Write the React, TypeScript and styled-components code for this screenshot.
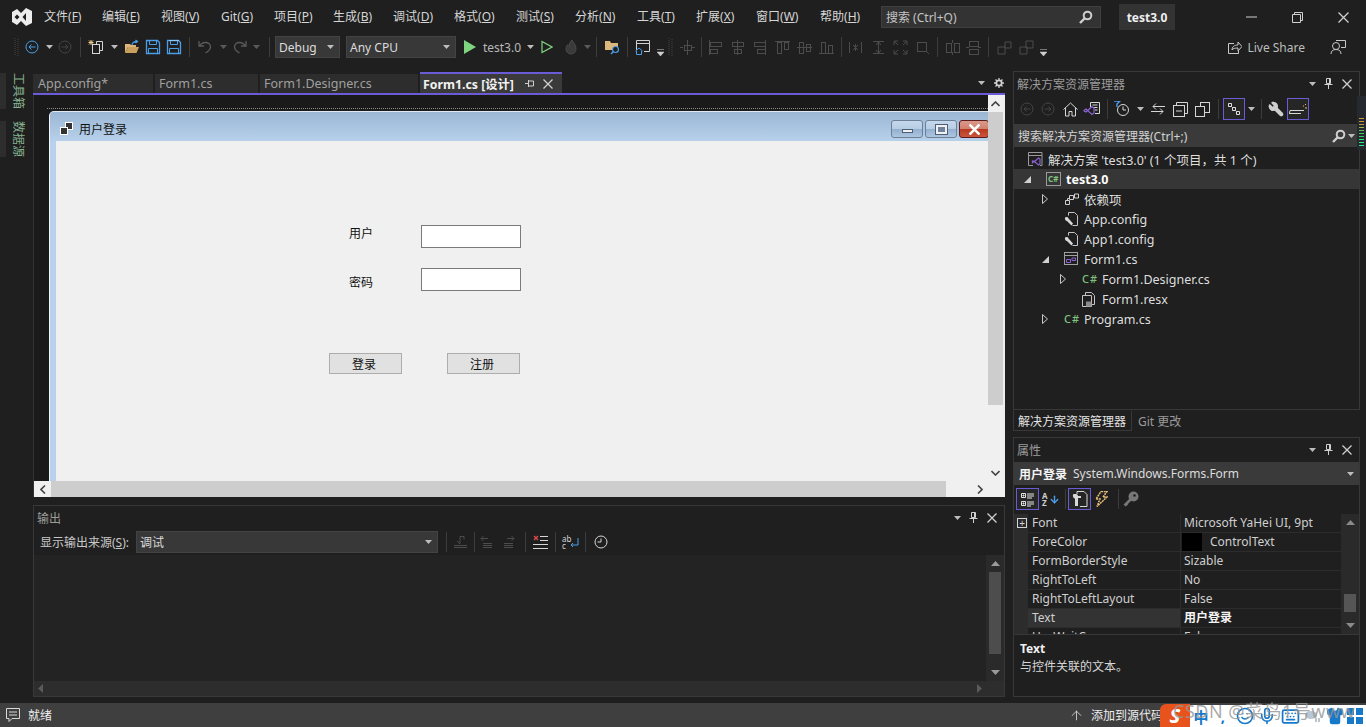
import React from 'react'
import styled, { createGlobalStyle } from 'styled-components'
import { ArrowUp, Keyboard, Mic, Shirt, Smile, Wrench } from 'lucide-react'

const GlobalStyle = createGlobalStyle`
  html, body { margin: 0; padding: 0; background: #1f1f1f; overflow: hidden; }
  * { box-sizing: border-box; }
  body { font-family: "Noto Sans", "Noto Sans CJK SC", sans-serif; font-size: 12px; color: #dcdcdc; }
`

const PURPLE = '#6a5bd6'

const Page = styled.div`
  position: relative;
  width: 1366px;
  height: 727px;
  display: flex;
  flex-direction: column;
  background: #1f1f1f;
  overflow: hidden;
`

/* ---------- top bars ---------- */
const TitleRow = styled.div`
  height: 34px;
  display: flex;
  align-items: center;
  padding-left: 11px;
  flex: none;
`
const Logo = styled.div`
  width: 33px;
  display: flex;
  align-items: center;
  flex: none;
`
const MenuBar = styled.div`
  display: flex;
  width: 837px;
  flex: none;
`
const MenuItem = styled.div<{ $w: number }>`
  width: ${p => p.$w}px;
  flex: none;
  color: #d6d6d6;
  white-space: nowrap;
  line-height: 34px;
  font-size: 12px;
`
const SearchBox = styled.div`
  width: 220px;
  height: 22px;
  background: #333333;
  border: 1px solid #3f3f3f;
  display: flex;
  align-items: center;
  justify-content: space-between;
  padding: 0 7px 0 4px;
  color: #c4c4c4;
  flex: none;
`
const ProjectName = styled.div`
  margin-left: 18px;
  width: 56px;
  height: 26px;
  background: #333333;
  color: #f0f0f0;
  font-weight: 700;
  font-size: 12px;
  display: flex;
  align-items: center;
  justify-content: center;
  flex: none;
`
const WinButtons = styled.div`
  margin-left: auto;
  display: flex;
`
const WinButton = styled.div`
  width: 46px;
  height: 34px;
  display: flex;
  align-items: center;
  justify-content: center;
`
const ToolbarRow = styled.div`
  height: 28px;
  display: flex;
  align-items: center;
  padding: 0 0 2px 12px;
  flex: none;
`
const Slot = styled.div<{ $w: number }>`
  width: ${p => p.$w}px;
  height: 22px;
  flex: none;
  display: flex;
  align-items: center;
  justify-content: center;
`
const LowSlot = styled(Slot)`
  padding-top: 11px;
`
const Sep = styled.div`
  width: 1px;
  height: 20px;
  background: #3c3c3c;
`
const Combo = styled.div<{ $w: number; $mr?: number }>`
  width: ${p => p.$w}px;
  margin-right: ${p => p.$mr || 0}px;
  height: 22px;
  flex: none;
  background: #383838;
  border: 1px solid #434343;
  display: flex;
  align-items: center;
  justify-content: space-between;
  padding: 0 5px 0 3px;
  color: #dcdcdc;
`
const ToolText = styled.span`
  color: #b9b9b9;
  white-space: nowrap;
`
const LiveShare = styled.div`
  margin-left: auto;
  display: flex;
  align-items: center;
  gap: 5px;
  color: #bdbdbd;
  padding-right: 20px;
`

/* ---------- main area ---------- */
const Main = styled.div`
  flex: 1;
  display: flex;
  min-height: 0;
`
const Rail = styled.div`
  width: 33px;
  flex: none;
  padding-top: 11px;
  display: flex;
  flex-direction: column;
  gap: 12px;
`
const RailTab = styled.div`
  width: 25px;
  height: 36px;
  border-left: 6px solid #2d2d2d;
  writing-mode: vertical-rl;
  text-orientation: sideways;
  color: #85b08f;
  font-size: 12px;
  line-height: 14px;
`
const Center = styled.div`
  width: 972px;
  flex: none;
  display: flex;
  flex-direction: column;
  padding-top: 10px;
  padding-bottom: 6px;
  gap: 8px;
`
const Editor = styled.div`
  height: 425px;
  flex: none;
  display: flex;
  flex-direction: column;
`
const TabStrip = styled.div`
  height: 23px;
  flex: none;
  display: flex;
  gap: 2px;
  border-bottom: 2px solid ${PURPLE};
  align-items: stretch;
`
const Tab = styled.div<{ $w: number; $pl?: number; $active?: boolean }>`
  width: ${p => p.$w}px;
  flex: none;
  background: ${p => (p.$active ? '#3a3a3a' : '#2d2d2d')};
  border-top: 2px solid ${p => (p.$active ? PURPLE : '#1f1f1f')};
  color: ${p => (p.$active ? '#f2f2f2' : '#a0a0a0')};
  font-weight: ${p => (p.$active ? 700 : 400)};
  padding-left: ${p => p.$pl ?? 4}px;
  display: flex;
  align-items: center;
  white-space: nowrap;
  font-size: ${p => (p.$active ? 12.3 : 12.5)}px;
`
const TabIcons = styled.div`
  margin-left: 4px;
  display: flex;
  align-items: center;
`
const TabTools = styled.div`
  margin-left: auto;
  display: flex;
  align-items: center;
  gap: 8px;
`
const DesignerGrid = styled.div`
  flex: 1;
  display: grid;
  grid-template-columns: 1fr 17px;
  grid-template-rows: 1fr 16px;
  min-height: 0;
  border-left: 1px solid #333;
`
const Canvas = styled.div`
  position: relative;
  background: #1a1a1a;
  overflow: hidden;
`
const DotLine = styled.div`
  position: absolute;
  left: 13px;
  right: 0;
  top: 13px;
  border-top: 1px dotted #8a8a8a;
`
const FormWindow = styled.div`
  position: absolute;
  left: 15px;
  top: 16px;
  width: 960px;
  height: 400px;
  background: linear-gradient(#9bb6d4, #b8d2ec 30px);
  border-top: 1px solid #dfe9f3;
  border-left: 1px solid #f4f7fa;
  border-radius: 5px 0 0 0;
`
const Caption = styled.div`
  height: 29px;
  display: flex;
  align-items: center;
  padding: 4px 0 0 10px;
  gap: 6px;
  color: #111;
`
const CapButtons = styled.div`
  position: absolute;
  right: 20px;
  top: 8px;
  display: flex;
  gap: 2px;
`
const CapButton = styled.div<{ $close?: boolean }>`
  width: ${p => (p.$close ? '30px' : '32px')};
  height: 18px;
  border: 1px solid ${p => (p.$close ? '#5c1a1a' : '#6d7f96')};
  border-radius: 3px;
  background: ${p =>
    p.$close
      ? 'linear-gradient(#d99a8c 0, #d3806e 48%, #b8391f 52%, #c9563c 100%)'
      : 'linear-gradient(#c5d8ec 0, #b6cde4 48%, #93b0cf 52%, #adc6e0 100%)'};
  display: flex;
  align-items: center;
  justify-content: center;
`
const MinGlyph = styled.div`
  width: 11px;
  height: 4px;
  background: #eef2f6;
  border: 1px solid #4e5d70;
  margin-top: 3px;
`
const MaxGlyph = styled.div`
  width: 11px;
  height: 9px;
  border: 2px solid #eef2f6;
  outline: 1px solid #4e5d70;
  background: #6f8299;
`
const Client = styled.div`
  position: relative;
  margin-left: 6px;
  height: 370px;
  background: #f0f0f0;
`
const FormLabel = styled.div<{ $x: number; $y: number }>`
  position: absolute;
  left: ${p => p.$x}px;
  top: ${p => p.$y}px;
  color: #111;
  font-size: 12px;
  line-height: 16px;
`
const FormInput = styled.div<{ $x: number; $y: number }>`
  position: absolute;
  left: ${p => p.$x}px;
  top: ${p => p.$y}px;
  width: 100px;
  height: 23px;
  background: #fff;
  border: 1px solid #7a7a7a;
`
const FormButton = styled.div<{ $x: number; $y: number }>`
  position: absolute;
  left: ${p => p.$x}px;
  top: ${p => p.$y}px;
  width: 73px;
  height: 21px;
  padding-right: 3px;
  background: #e1e1e1;
  border: 1px solid #adadad;
  color: #111;
  font-size: 12px;
  display: flex;
  align-items: center;
  justify-content: center;
`
const VScroll = styled.div`
  background: #f0f0f0;
  display: flex;
  flex-direction: column;
  border-right: 2px solid #eee;
`
const VThumb = styled.div`
  height: 293px;
  background: #cdcdcd;
  flex: none;
`
const ScrollCap = styled.div`
  height: 17px;
  flex: none;
  display: flex;
  align-items: center;
  justify-content: center;
`
const HScroll = styled.div`
  background: #f0f0f0;
  display: flex;
  align-items: center;
`
const HThumb = styled.div`
  width: 895px;
  height: 16px;
  background: #cdcdcd;
  flex: none;
`
const HCap = styled.div`
  width: 17px;
  height: 16px;
  flex: none;
  display: flex;
  align-items: center;
  justify-content: center;
`
const Corner = styled.div`
  background: #f0f0f0;
`

/* ---------- output ---------- */
const Panel = styled.div<{ $h?: number; $grow?: boolean }>`
  ${p => (p.$h ? `height: ${p.$h}px;` : '')}
  flex: ${p => (p.$grow ? 1 : 'none')};
  min-height: 0;
  border: 1px solid #383838;
  display: flex;
  flex-direction: column;
`
const PanelHeader = styled.div`
  height: 23px;
  flex: none;
  display: flex;
  align-items: center;
  padding: 0 7px 0 3px;
  color: #9c9c9c;
  font-size: 12px;
`
const PanelTools = styled.div`
  margin-left: auto;
  display: flex;
  align-items: center;
  gap: 7px;
`
const OutputBar = styled.div`
  height: 26px;
  flex: none;
  display: flex;
  align-items: center;
  padding-left: 6px;
`
const OutputLabel = styled.span`
  width: 96px;
  flex: none;
  color: #c8c8c8;
  white-space: nowrap;
`
const OutputBody = styled.div`
  flex: 1;
  min-height: 0;
  display: grid;
  grid-template-columns: 1fr 18px;
  grid-template-rows: 1fr 15px;
  background: #232323;
`
const DarkV = styled.div`
  background: #2a2a2a;
  display: flex;
  flex-direction: column;
  align-items: stretch;
`
const DarkThumb = styled.div`
  margin: 0 3px;
  height: 82px;
  background: #4d4d4d;
  flex: none;
`
const DarkFill = styled.div`
  flex: 1;
`
const DarkH = styled.div`
  grid-column: 1 / 3;
  background: #2d2d2d;
  display: flex;
  justify-content: space-between;
  align-items: center;
  padding: 0 22px 0 4px;
`

/* ---------- right side ---------- */
const Side = styled.div`
  position: relative;
  margin-left: 8px;
  width: 347px;
  flex: none;
  padding-top: 9px;
  padding-bottom: 6px;
  display: flex;
  flex-direction: column;
`
const SideIconBar = styled.div<{ $pl: number }>`
  height: 28px;
  flex: none;
  display: flex;
  align-items: center;
  padding-left: ${p => p.$pl}px;
`
const Boxed = styled.div<{ $w: number }>`
  width: ${p => p.$w}px;
  height: 22px;
  flex: none;
  display: flex;
  align-items: center;
  justify-content: center;
  border: 1px solid ${PURPLE};
  background: #262626;
`
const SearchBar = styled.div`
  height: 23px;
  margin: 1px 0;
  flex: none;
  background: #3a3a3a;
  display: flex;
  align-items: center;
  justify-content: space-between;
  padding: 0 2px 0 4px;
  color: #d2d2d2;
`
const Tree = styled.div`
  height: 261px;
  flex: none;
  padding-top: 1px;
`
const TreeRow = styled.div<{ $indent: number; $selected?: boolean }>`
  height: 20px;
  display: flex;
  align-items: center;
  padding-left: ${p => p.$indent}px;
  background: ${p => (p.$selected ? '#363636' : 'transparent')};
  color: ${p => (p.$selected ? '#fff' : '#dedede')};
  font-weight: ${p => (p.$selected ? 700 : 400)};
  white-space: nowrap;
  font-size: 12.5px;
`
const ArrowSlot = styled.div<{ $w: number }>`
  width: ${p => p.$w}px;
  flex: none;
  display: flex;
  justify-content: center;
  padding-right: ${p => (p.$w > 20 ? 6 : 0)}px;
`
const IconSlot = styled.div`
  width: 20px;
  flex: none;
  display: flex;
  align-items: center;
`
const BottomTabs = styled.div`
  height: 27px;
  flex: none;
  display: flex;
  align-items: flex-start;
`
const BottomTab = styled.div<{ $active?: boolean }>`
  height: 21px;
  padding: 0 5px 0 4px;
  display: flex;
  align-items: center;
  color: ${p => (p.$active ? '#e4e4e4' : '#9a9a9a')};
  border: ${p => (p.$active ? '1px solid #383838' : 'none')};
  border-top: ${p => (p.$active ? '1px solid #1f1f1f' : 'none')};
  margin-right: ${p => (p.$active ? '2px' : 0)};
  font-size: 12px;
`
const ObjectBar = styled.div`
  height: 23px;
  margin-top: 1px;
  flex: none;
  background: #3a3a3a;
  display: flex;
  align-items: center;
  padding: 0 5px;
  gap: 6px;
  color: #dcdcdc;
`
const ObjectName = styled.b`
  color: #f4f4f4;
`
const PropGrid = styled.div`
  height: 120px;
  margin-top: 1px;
  flex: none;
  display: grid;
  grid-template-columns: 1fr 18px;
  overflow: hidden;
`
const PropRows = styled.div`
  height: 100%;
  overflow: hidden;
  background: #2c2c2c;
  padding-left: 14px;
`
const PropRow = styled.div`
  height: 19px;
  display: grid;
  grid-template-columns: 152px 1fr;
  column-gap: 1px;
  padding-bottom: 1px;
`
const PropName = styled.div<{ $selected?: boolean }>`
  background: ${p => (p.$selected ? '#333333' : '#1f1f1f')};
  color: #cfcfcf;
  padding-left: 4px;
  line-height: 18px;
  white-space: nowrap;
`
const PropValue = styled.div<{ $bold?: boolean }>`
  background: #1f1f1f;
  color: ${p => (p.$bold ? '#f4f4f4' : '#cfcfcf')};
  font-weight: ${p => (p.$bold ? 700 : 400)};
  padding-left: 3px;
  line-height: 18px;
  display: flex;
  align-items: center;
  white-space: nowrap;
`
const Swatch = styled.span`
  width: 20px;
  height: 18px;
  background: #000;
  flex: none;
  margin: 0 8px 0 -2px;
`
const Expander = styled.div`
  position: absolute;
  left: 3px;
  top: 4px;
  width: 10px;
  height: 10px;
  border: 1px solid #d4d4d4;
  display: flex;
  align-items: center;
  justify-content: center;
  color: #d4d4d4;
  font-size: 10px;
  line-height: 8px;
`
const PropBlock = styled.div`
  position: relative;
  min-height: 0;
`
const PropScroll = styled.div`
  background: #2a2a2a;
  display: flex;
  flex-direction: column;
`
const PropThumb = styled.div`
  margin: 63px 3px 0;
  height: 18px;
  background: #555;
  flex: none;
`
const Desc = styled.div`
  flex: 1;
  min-height: 0;
  border-top: 1px solid #383838;
  padding: 5px 6px;
  line-height: 18px;
`
const DescTitle = styled.div`
  font-weight: 700;
  color: #f0f0f0;
`
const DescText = styled.div`
  color: #d6d6d6;
`
const Heat = styled.div`
  position: absolute;
  right: -6px;
  top: 34px;
  width: 9px;
  height: 54px;
  background: #262a30;
  border-radius: 2px 0 0 2px;
  display: flex;
  flex-direction: column;
  justify-content: flex-end;
  gap: 2px;
  padding: 4px 2px;
`
const HeatTick = styled.div<{ $c: string }>`
  height: 1px;
  background: ${p => p.$c};
`

/* ---------- status bar ---------- */
const Status = styled.div`
  height: 24px;
  flex: none;
  background: #3f3f3f;
  display: flex;
  align-items: center;
  padding-left: 6px;
  color: #eee;
`
const StatusLabel = styled.span`
  margin-left: 7px;
`
const StatusRight = styled.div`
  margin-left: auto;
  width: 297px;
  display: flex;
  align-items: center;
  gap: 7px;
  flex: none;
`
const Ime = styled.div`
  position: absolute;
  right: 0;
  bottom: 0;
  width: 176px;
  height: 22px;
  background: #fff;
  display: flex;
  align-items: center;
`
const ImeLogo = styled.div`
  position: absolute;
  left: -30px;
  top: -1px;
  width: 30px;
  height: 23px;
  background: #e8521c;
  border-radius: 6px 0 0 0;
  color: #fff;
  font-weight: 800;
  font-size: 20px;
  line-height: 23px;
  text-align: center;
  font-style: italic;
  overflow: hidden;
`
const ImeItem = styled.div<{ $w: number }>`
  width: ${p => p.$w}px;
  flex: none;
  display: flex;
  justify-content: center;
  align-items: center;
  color: #1679c9;
  font-size: 15px;
  font-weight: 700;
`
const ImeGrid = styled.div`
  width: 16px;
  height: 16px;
  display: grid;
  grid-template-columns: 1fr 1fr;
  gap: 2px;
`
const ImeCell = styled.div`
  background: #1679c9;
`
const Watermark = styled.div`
  position: absolute;
  left: 1173px;
  bottom: 4px;
  color: rgba(150, 150, 150, 0.82);
  font-size: 18px;
  letter-spacing: 0.5px;
  line-height: 24px;
  white-space: nowrap;
  pointer-events: none;
`

/* ---------- icons ---------- */
type Ico = { c?: string }
const Svg = ({ w = 16, h = 16, children }: { w?: number; h?: number; children: React.ReactNode }) => (
  <svg width={w} height={h} viewBox={`0 0 ${w} ${h}`} fill="none" style={{ flex: 'none', display: 'block' }}>
    {children}
  </svg>
)
const Down = ({ c = '#bdbdbd' }: Ico) => (
  <Svg w={7} h={4}><path d="M0 0h7L3.5 4z" fill={c} /></Svg>
)
const Grip = () => (
  <Svg w={5} h={20}><path d="M1 1v18M4 2v18" stroke="#444" strokeDasharray="1 1" /></Svg>
)
const CircleArrow = ({ c, back }: { c: string; back?: boolean }) => (
  <Svg w={14} h={14}>
    <circle cx="7" cy="7" r="6" stroke={c} />
    <path d={back ? 'M10.5 7H4M6.5 4.5 4 7l2.5 2.5' : 'M3.5 7H10M7.5 4.5 10 7 7.5 9.5'} stroke={c} />
  </Svg>
)
const NewProject = () => (
  <Svg>
    <path d="M3 1v5M.5 3.5h5M1 1.500l4 4M5 1.500l-4 4" stroke="#e8c98a" />
    <rect x="4.500" y="5.500" width="7" height="9" stroke="#d6d6d6" />
    <path d="M8.500 5V2.500h6v9h-3" stroke="#d6d6d6" />
  </Svg>
)
const OpenFolder = () => (
  <Svg>
    <path d="M1 5h5l1 1h5v2H4L1 14z" fill="#dcb67a" />
    <path d="M4 8h11l-2.500 6H1z" fill="#c9a05c" />
    <path d="M8 6c0-2 2-3.500 5-3.500M11.500 1l2 1.500-2 1.500" stroke="#4a9fe8" strokeWidth="1.300" />
  </Svg>
)
const Save = ({ all }: { all?: boolean }) => (
  <Svg>
    <path d="M1.500 1.500h11l2 2v11h-13z" stroke="#4a9fe8" strokeWidth="1.300" />
    <path d="M4.500 1.500v4h7v-4M3.500 14.500v-5h9v5" stroke="#4a9fe8" />
    {all && <path d="M3 1.500h10" stroke="#8cc4f2" />}
  </Svg>
)
const Undo = ({ flip }: { flip?: boolean }) => (
  <Svg w={14} h={14}>
    <g transform={flip ? 'translate(14 0) scale(-1 1)' : undefined}>
      <path d="M1 1v5h5M1.500 6C3 3.500 5 2.500 7.500 2.500c3 0 5 2 5 4.500 0 2.500-2.500 4.500-5 6" stroke="#5a5a5a" strokeWidth="1.300" />
    </g>
  </Svg>
)
const Play = () => (
  <Svg w={12} h={14}><path d="M0 0l12 7-12 7z" fill="#7fd47f" /></Svg>
)
const PlayOutline = () => (
  <Svg w={12} h={14}><path d="M1 1.500 11 7 1 12.500z" stroke="#7fd47f" strokeWidth="1.200" /></Svg>
)
const Flame = () => (
  <Svg>
    <path d="M9 1c1 3 4 4 4 8.500A5 5 0 0 1 8 15a5 5 0 0 1-5-5.500c0-2 1-3 2-4 0 1.500.5 2 1.500 2.500C6 5 7 3 9 1z" stroke="#4a4a4a" fill="#3a3a3a" />
  </Svg>
)
const FolderFind = () => (
  <Svg w={16} h={16}>
    <path d="M1 2h5l1 2h7v7H1z" fill="#dcb67a" />
    <circle cx="11.500" cy="10.500" r="3" fill="#1f1f1f" stroke="#4a9fe8" strokeWidth="1.200" />
    <path d="M9.500 12.500 7 15" stroke="#4a9fe8" strokeWidth="1.500" />
  </Svg>
)
const WinHome = () => (
  <Svg w={15} h={15}>
    <path d="M1.500 10V.5h13v11H9M1.500 3.500h13" stroke="#d0d0d0" />
    <path d="M.5 11 4 8l3.500 3M1.500 11v3.500h5V11" stroke="#4a9fe8" />
  </Svg>
)
const More = () => (
  <Svg w={7} h={7}><path d="M0 .5h7M0 3h7L3.500 7z" fill="#d0d0d0" stroke="#d0d0d0" strokeWidth=".5" /></Svg>
)
// grey layout icons from the disabled format toolbar
const Layout = ({ d, r }: { d: string; r?: number[][] }) => (
  <Svg w={15} h={15}>
    <path d={d} stroke="#4c4c4c" />
    {r && r.map((b, i) => <rect key={i} x={b[0] + 0.5} y={b[1] + 0.5} width={b[2]} height={b[3]} stroke="#4c4c4c" />)}
  </Svg>
)
const Magnifier = ({ c = '#cfcfcf' }: Ico) => (
  <Svg w={14} h={14}>
    <circle cx="8.500" cy="5.500" r="3.800" stroke={c} strokeWidth="2" />
    <path d="M5.500 8.500 1 13" stroke={c} strokeWidth="2.400" />
  </Svg>
)
const Close = ({ c = '#d0d0d0', s = 10, sw = 1.3 }: { c?: string; s?: number; sw?: number }) => (
  <Svg w={s} h={s}><path d={`M.5.5l${s - 1} ${s - 1}M${s - 0.5} .5l-${s - 1} ${s - 1}`} stroke={c} strokeWidth={sw} /></Svg>
)
const PinV = ({ c = '#d0d0d0' }: Ico) => (
  <Svg w={9} h={11}>
    <path d="M2.500.5h4v5h-4zM.5 6.500h8M4.500 6.500V11M5.500 1v4" stroke={c} />
  </Svg>
)
const PinH = () => (
  <Svg w={9} h={9}><path d="M3.500 2h5v5h-5zM3.500 1v7M0 4.500h3.500" stroke="#d0d0d0" /></Svg>
)
const Gear = () => (
  <Svg w={10} h={10}>
    <circle cx="5" cy="5" r="2.700" stroke="#d0d0d0" strokeWidth="1.800" />
    <path d="M5 0v2M5 8v2M0 5h2M8 5h2M1.500 1.500 3 3M7 7l1.500 1.500M1.500 8.500 3 7M7 3l1.500-1.500" stroke="#d0d0d0" strokeWidth="1.300" />
  </Svg>
)
const Chevron = ({ up, c = '#444' }: { up?: boolean; c?: string }) => (
  <Svg w={9} h={6}>
    <path d={up ? 'M.5 5 4.500 1l4 4' : 'M.5 1l4 4 4-4'} stroke={c} strokeWidth="1.600" />
  </Svg>
)
const ChevronH = ({ left }: { left?: boolean }) => (
  <Svg w={6} h={9}>
    <path d={left ? 'M5 .5 1 4.500l4 4' : 'M1 .5l4 4-4 4'} stroke="#444" strokeWidth="1.600" />
  </Svg>
)
const Tri = ({ up, c = '#6a6a6a' }: { up?: boolean; c?: string }) => (
  <Svg w={9} h={5}><path d={up ? 'M0 5h9L4.500 0z' : 'M0 0h9L4.500 5z'} fill={c} /></Svg>
)
const Home = () => (
  <Svg w={15} h={15}><path d="M.5 7.500 7.500 1l7 6.500M2.500 6v8h3.500V9.500h3V14h3.500V6" stroke="#d6d6d6" /></Svg>
)
const VsDoc = () => (
  <Svg w={18} h={16}>
    <path d="M7.500 6V1.500h9v11H12" stroke="#d6d6d6" />
    <path d="M9.500 4h5M10.500 6.500h4M12 9h2.500" stroke="#d6d6d6" />
    <path d="M1 9.500 3 8l6 5.500L11 12V7L9 5.500 3 11 1 10z" stroke="#8a63d2" strokeWidth="1.200" />
  </Svg>
)
const History = () => (
  <Svg>
    <circle cx="9" cy="9" r="5.500" stroke="#d6d6d6" />
    <path d="M9 5.500V9h3" stroke="#d6d6d6" />
    <path d="M0 0h6L3 3v3" stroke="#4a9fe8" strokeWidth="1.400" />
  </Svg>
)
const SyncArrows = () => (
  <Svg w={14} h={12}><path d="M14 3.500H2M5 .5l-3 3 3 3M0 8.500h12M9 5.500l3 3-3 3" stroke="#d6d6d6" /></Svg>
)
const Collapse = () => (
  <Svg w={15} h={15}><path d="M3.500 3.500v-3h11v11h-3" stroke="#d6d6d6" /><rect x=".5" y="3.500" width="11" height="11" stroke="#d6d6d6" /><path d="M3 9h6" stroke="#d6d6d6" /></Svg>
)
const CopyPages = () => (
  <Svg w={15} h={15}><rect x="5.500" y=".5" width="9" height="10" stroke="#d6d6d6" /><rect x=".5" y="4.500" width="9" height="10" fill="#1f1f1f" stroke="#d6d6d6" /></Svg>
)
const Nodes = () => (
  <Svg w={14} h={14}><path d="M1.500 1.500h3v3h-3zM5.500 5.500h3v3h-3zM9.500 9.500h3v3h-3zM4.500 4.500l1 1M8.500 8.500l1 1" stroke="#e0e0e0" /></Svg>
)
const WrenchIcon = ({ c = '#cfcfcf' }: Ico) => <Wrench size={16} color={c} fill={c} style={{ transform: 'scaleX(-1)' }} />
const PropPage = () => (
  <Svg w={18} h={10}>
    <path d="M0 9.500h12M7 6.500h8" stroke="#d6d6d6" />
    <path d="M.5 9 1 6.500h9" stroke="#d6d6d6" />
    <path d="M14 2h1M16 4h2M16 0l1 1" stroke="#e8c45a" />
  </Svg>
)
const SolutionIcon = () => (
  <Svg w={15} h={15}>
    <path d="M5 13.500H.5V.5h13.500v13H12M.5 3.500h13.500" stroke="#9a9a9a" />
    <path d="M4.500 10.500 6 9l4.500 4 1.500-1V7l-1.500-1L6 10l-1.500-1z" stroke="#8a63d2" strokeWidth="1.200" />
  </Svg>
)
const CsBox = () => (
  <Svg w={15} h={15}><rect x=".5" y=".5" width="14" height="13" stroke="#9a9a9a" /></Svg>
)
const CsText = styled.span`
  color: #7ec27e;
  font-weight: 500;
  font-size: 11px;
  line-height: 12px;
  letter-spacing: 1px;
`
const CsBadge = styled.span`
  position: relative;
  width: 15px;
  height: 14px;
  display: block;
`
const CsInner = styled(CsText)`
  position: absolute;
  left: 2px;
  top: 1px;
  font-size: 8px;
  letter-spacing: 0;
  font-weight: 700;
`
const Deps = () => (
  <Svg w={16} h={12}>
    <path d="M1.500 7.500h4v4h-4zM5.500 2.500h4v4h-4zM10.500 1h4v4h-4zM3.500 7.500V5.500h2M9.500 3.500h1" stroke="#d0d0d0" />
  </Svg>
)
const ConfigFile = () => (
  <Svg w={15} h={15}>
    <path d="M4.500 3.500V.5h6l3 3v10h-5" stroke="#c4c4c4" />
    <path d="M1 5.500c1.500-1 3.500-.5 3.500 1L9 11.500l-1.500 2L3 9C1.500 9 .5 7 1 5.500z" fill="#d8d8d8" />
  </Svg>
)
const FormIcon = () => (
  <Svg w={15} h={14}>
    <rect x=".5" y=".5" width="13" height="12" stroke="#a0a0a0" />
    <path d="M1 3.500h12" stroke="#a0a0a0" />
    <path d="M2.500 7.500h4v3h-4zM8 6h3.500v2.500H8z" stroke="#8a63d2" />
  </Svg>
)
const ResxIcon = () => (
  <Svg w={13} h={15}>
    <path d="M3.500 3V.5h6l3 3v9h-3" stroke="#c4c4c4" />
    <path d="M.5 3.500h9v11h-9z" stroke="#c4c4c4" />
    <path d="M4 9.500h5.500v5H4z" fill="#8a8a8a" />
  </Svg>
)
const OpenArrow = ({ open }: { open?: boolean }) =>
  open ? (
    <Svg w={7} h={7}><path d="M7 0v7H0z" fill="#d0d0d0" /></Svg>
  ) : (
    <Svg w={6} h={10}><path d="M.5.5 5.500 5 .5 9.500z" stroke="#c8c8c8" /></Svg>
  )
const Categories = () => (
  <Svg w={15} h={15}>
    <path d="M1.500 1.500h4v4h-4zM1.500 9.500h4v4h-4zM3.500 2.500v2M2.500 3.500h2M3.500 10.500v2M2.500 11.500h2M7 2h7M7 4h7M7 6h5M7 10h7M7 12h7M7 14h4" stroke="#e4e4e4" />
  </Svg>
)
const Alpha = styled.div`
  position: relative;
  width: 18px;
  height: 15px;
  color: #d0d0d0;
  font-size: 8px;
  line-height: 7px;
  font-weight: 700;
`
const AlphaArrow = styled.div`
  position: absolute;
  right: 0;
  top: 2px;
`
const PropIcon = () => (
  <Svg w={16} h={16}>
    <path d="M5 3V.5h7l3 3v12H8" stroke="#d8d8d8" />
    <path d="M1 3.500C3 2.500 6 3 6 5l3 0 0 2-3 0 0 8H3V7.500C1.500 7.500.5 5.500 1 3.500z" fill="#d8d8d8" />
  </Svg>
)
const Bolt = () => (
  <Svg w={14} h={16}>
    <path d="M7 .5h6L9 6h4L3 15.500 6 8H2z" stroke="#e8bf7a" strokeDasharray="2 .7" strokeWidth="1.500" />
  </Svg>
)
const KeyIcon = () => (
  <Svg w={16} h={16}>
    <circle cx="10.500" cy="5.500" r="5" fill="#777" />
    <circle cx="11.500" cy="4.500" r="1.300" fill="#1f1f1f" />
    <path d="M8 8 1.500 14.500M2.500 12l2 2" stroke="#777" strokeWidth="2.600" />
  </Svg>
)
const Clear = () => (
  <Svg w={15} h={15}>
    <path d="M1 1l4 4M5 1 1 5" stroke="#e04b4b" strokeWidth="1.300" />
    <path d="M7 1.500h8M7 5.500h8M0 9.500h15M0 13.500h15" stroke="#d6d6d6" />
  </Svg>
)
const AbcWrap = () => (
  <Svg w={9} h={14}>
    <path d="M8 3v7H1M3 8l-2 2 2 2" stroke="#4a9fe8" />
  </Svg>
)
const ClockFlat = () => (
  <Svg w={14} h={14}><circle cx="7" cy="7" r="6" stroke="#d6d6d6" /><path d="M7 3.500V7H3.500" stroke="#d6d6d6" /></Svg>
)
const OutDisabled = ({ d }: { d: string }) => (
  <Svg w={14} h={14}><path d={d} stroke="#4c4c4c" /></Svg>
)
const AbcLabel = styled.div`
  font-size: 8px;
  line-height: 7px;
  color: #d6d6d6;
  width: 8px;
  flex: none;
`
const WinIcon = styled.div`
  position: relative;
  width: 13px;
  height: 13px;
  flex: none;
`
const WinBack = styled.div`
  position: absolute;
  right: 0;
  top: 0;
  width: 8px;
  height: 8px;
  background: #333;
  border: 1px solid #fff;
`
const WinFront = styled.div`
  position: absolute;
  left: 0;
  bottom: 0;
  width: 8px;
  height: 8px;
  background: #333;
  border: 1px solid #fff;
`
const VsLogo = () => (
  <Svg w={22} h={20}>
    <path
      d="M6 2 10 6 15 1l6 3v12l-6 3-5-5-4 4-5-3V5zM6 7.500 3.500 10 6 12.500 8.500 10zM15 6l-3.500 4 3.500 4z"
      fill="#ededed"
      fillRule="evenodd"
    />
  </Svg>
)

/* ---------- data ---------- */
const menus: [string, string, number][] = [
  ['文件', 'F', 58], ['编辑', 'E', 59], ['视图', 'V', 60], ['Git', 'G', 53], ['项目', 'P', 59],
  ['生成', 'B', 60], ['调试', 'D', 61], ['格式', 'O', 62], ['测试', 'S', 59], ['分析', 'N', 62],
  ['工具', 'T', 59], ['扩展', 'X', 60], ['窗口', 'W', 64], ['帮助', 'H', 61],
]

const alignIcons: React.ReactNode[] = [
  <Layout d="M1.500 0v15" r={[[2, 2, 11, 4], [2, 9, 7, 4]]} />,
  <Layout d="M7.500 0v15" r={[[2, 2, 11, 4], [4, 9, 7, 4]]} />,
  <Layout d="M13.500 0v15" r={[[2, 2, 11, 4], [5, 9, 8, 4]]} />,
  <Layout d="M0 1.500h15" r={[[2, 2, 4, 11], [9, 2, 4, 7]]} />,
  <Layout d="M0 7.500h15" r={[[2, 2, 4, 11], [9, 4, 4, 7]]} />,
  <Layout d="M0 13.500h15" r={[[2, 2, 4, 11], [9, 5, 4, 8]]} />,
]

const propRows = [
  { name: 'Font', value: 'Microsoft YaHei UI, 9pt' },
  { name: 'ForeColor', value: 'ControlText', swatch: true },
  { name: 'FormBorderStyle', value: 'Sizable' },
  { name: 'RightToLeft', value: 'No' },
  { name: 'RightToLeftLayout', value: 'False' },
  { name: 'Text', value: '用户登录', selected: true },
  { name: 'UseWaitCursor', value: 'False' },
]

const heatColors = ['#c93', '#c93', '#b94', '#9b4', '#6b5', '#3c6', '#3c6', '#2e8', '#2e8', '#2e8']

const S = ({ w, children }: { w: number; children?: React.ReactNode }) => <Slot $w={w}>{children}</Slot>

export default function App() {
  return (
    <Page>
      <GlobalStyle />
      <TitleRow>
        <Logo><VsLogo /></Logo>
        <MenuBar>
          {menus.map(([t, k, w]) => (
            <MenuItem key={k} $w={w}>{t}(<u>{k}</u>)</MenuItem>
          ))}
        </MenuBar>
        <SearchBox>
          <span>搜索 (Ctrl+Q)</span>
          <Magnifier />
        </SearchBox>
        <ProjectName>test3.0</ProjectName>
        <WinButtons>
          <WinButton><Svg w={11} h={2}><path d="M0 1h11" stroke="#d0d0d0" /></Svg></WinButton>
          <WinButton>
            <Svg w={11} h={11}><path d="M.5 2.500h8v8h-8zM2.500 2.500v-2h8v8h-2" stroke="#d0d0d0" /></Svg>
          </WinButton>
          <WinButton><Close s={11} /></WinButton>
        </WinButtons>
      </TitleRow>

      <ToolbarRow>
        <S w={8}><Grip /></S>
        <S w={4} />
        <S w={16}><CircleArrow c="#4a9fe8" back /></S>
        <S w={18}><Down /></S>
        <S w={14}><CircleArrow c="#444" /></S>
        <S w={16}><Sep /></S>
        <S w={16}><NewProject /></S>
        <S w={20}><Down /></S>
        <S w={16}><OpenFolder /></S>
        <S w={26}><Save /></S>
        <S w={16}><Save all /></S>
        <S w={14}><Sep /></S>
        <S w={18}><Undo /></S>
        <S w={18}><Down c="#5a5a5a" /></S>
        <S w={16}><Undo flip /></S>
        <S w={16}><Down c="#5a5a5a" /></S>
        <S w={11}><Sep /></S>
        <Combo $w={65} $mr={6}>Debug<Down /></Combo>
        <Combo $w={110}>Any CPU<Down /></Combo>
        <S w={27}><Play /></S>
        <S w={38}><ToolText>test3.0</ToolText></S>
        <S w={18}><Down /></S>
        <S w={16}><PlayOutline /></S>
        <S w={8} />
        <S w={16}><Flame /></S>
        <S w={16}><Down c="#5a5a5a" /></S>
        <S w={3}><Sep /></S>
        <S w={28}><FolderFind /></S>
        <S w={2}><Sep /></S>
        <S w={28}><WinHome /></S>
        <LowSlot $w={8}><More /></LowSlot>
        <S w={12}><Grip /></S>
        <S w={22}><Layout d="M0 7.500h3M12 7.500h3M7.500 0v15" r={[[4, 5, 7, 5]]} /></S>
        <S w={6}><Sep /></S>
        {alignIcons.map((icon, i) => <S key={i} w={22.3}>{icon}</S>)}
        <S w={7}><Sep /></S>
        <S w={22}><Layout d="M1.500 2v11M13.500 2v11M5 5l5 5M10 5l-5 5M7.500 4v7" /></S>
        <S w={23}><Layout d="M2 1.500h11M2 13.500h11M7.500 2v11M5 5l2.500-3L10 5M5 10l2.500 3 2.500-3" /></S>
        <S w={22}><Layout d="M1 5V1h4M10 1h4v4M1 10v4h4M14 10v4h-4M2 2l3 3M13 2l-3 3M2 13l3-3M13 13l-3-3" /></S>
        <S w={22}><Layout d="M11 11l3 3" r={[[2, 2, 9, 9]]} /></S>
        <S w={8}><Sep /></S>
        <S w={22}><Layout d="M7.500 0v3M7.500 12v3" r={[[1, 3, 5, 9], [9, 3, 5, 9]]} /></S>
        <S w={20}><Layout d="M0 7.500h3M12 7.500h3" r={[[3, 1, 9, 5], [3, 9, 9, 5]]} /></S>
        <S w={10}><Sep /></S>
        <S w={22}><Layout d="M1 7h7V14H1zM8 2h6v6H8z" /></S>
        <S w={22}><Layout d="M1 7h7V14H1zM7 1h7v7H7z" /></S>
        <LowSlot $w={12}><More /></LowSlot>
        <LiveShare>
          <Svg w={15} h={15}>
            <path d="M7 3.500H1.500v10h10V10M5 10c0-3 2-5 6-5V2l4 4.500-4 4.500V8C8 8 6 8.500 5 10z" stroke="#c8c8c8" />
          </Svg>
          Live Share
          <S w={15} />
          <Svg w={16} h={16}>
            <circle cx="6" cy="7" r="3.500" stroke="#c8c8c8" />
            <path d="M1 15c0-3 2-4.500 5-4.500s5 1.500 5 4.500M6 1.500h9.500v7H11" stroke="#c8c8c8" />
          </Svg>
        </LiveShare>
      </ToolbarRow>

      <Main>
        <Rail>
          <RailTab>工具箱</RailTab>
          <RailTab>数据源</RailTab>
        </Rail>

        <Center>
          <Editor>
            <TabStrip>
              <Tab $w={120} $pl={5}>App.config*</Tab>
              <Tab $w={103}>Form1.cs</Tab>
              <Tab $w={158}>Form1.Designer.cs</Tab>
              <Tab $w={142} $pl={3} $active>
                Form1.cs [设计]
                <TabIcons>
                  <S w={24}><PinH /></S>
                  <S w={12}><Close s={10} /></S>
                </TabIcons>
              </Tab>
              <TabTools>
                <Down />
                <S w={12}><Gear /></S>
              </TabTools>
            </TabStrip>
            <DesignerGrid>
              <Canvas>
                <DotLine />
                <FormWindow>
                  <Caption>
                    <WinIcon><WinBack /><WinFront /></WinIcon>
                    用户登录
                  </Caption>
                  <CapButtons>
                    <CapButton><MinGlyph /></CapButton>
                    <CapButton><MaxGlyph /></CapButton>
                    <CapButton $close><Close c="#fff" s={11} sw={2.6} /></CapButton>
                  </CapButtons>
                  <Client>
                    <FormLabel $x={293} $y={85}>用户</FormLabel>
                    <FormLabel $x={293} $y={134}>密码</FormLabel>
                    <FormInput $x={365} $y={84} />
                    <FormInput $x={365} $y={127} />
                    <FormButton $x={273} $y={212}>登录</FormButton>
                    <FormButton $x={391} $y={212}>注册</FormButton>
                  </Client>
                </FormWindow>
              </Canvas>
              <VScroll>
                <ScrollCap><Chevron up /></ScrollCap>
                <VThumb />
                <DarkFill />
                <ScrollCap><Chevron /></ScrollCap>
              </VScroll>
              <HScroll>
                <HCap><ChevronH left /></HCap>
                <HThumb />
                <DarkFill />
                <HCap><ChevronH /></HCap>
              </HScroll>
              <Corner />
            </DesignerGrid>
          </Editor>

          <Panel $h={192}>
            <PanelHeader>
              输出
              <PanelTools>
                <Down />
                <S w={11}><PinV /></S>
                <S w={11}><Close /></S>
              </PanelTools>
            </PanelHeader>
            <OutputBar>
              <OutputLabel>显示输出来源(<u>S</u>):</OutputLabel>
              <Combo $w={302}>调试<Down /></Combo>
              <S w={8} />
              <S w={1}><Sep /></S>
              <S w={27}><OutDisabled d="M0 12.500h13M0 10.500h13M6 1.500h4v3M6 1.500v7M3 6l3 3" /></S>
              <S w={1}><Sep /></S>
              <S w={23}><OutDisabled d="M1 3.500h7M3.500 1 1 3.500 3.500 6M3 8.500h9M3 10.500h9M3 12.500h9" /></S>
              <S w={22}><OutDisabled d="M5 3.500h7M9.500 1 12 3.500 9.500 6M2 8.500h9M2 10.500h9M2 12.500h9" /></S>
              <S w={5} />
              <S w={1}><Sep /></S>
              <S w={29}><Clear /></S>
              <S w={1}><Sep /></S>
              <S w={29}>
                <AbcLabel>ab<br />c</AbcLabel>
                <AbcWrap />
              </S>
              <S w={1}><Sep /></S>
              <S w={29}><ClockFlat /></S>
            </OutputBar>
            <OutputBody>
              <div />
              <DarkV>
                <ScrollCap><Tri up c="#9a9a9a" /></ScrollCap>
                <DarkThumb />
                <DarkFill />
                <ScrollCap><Tri c="#9a9a9a" /></ScrollCap>
              </DarkV>
              <DarkH>
                <Svg w={5} h={9}><path d="M5 0v9L0 4.500z" fill="#5a5a5a" /></Svg>
                <Svg w={5} h={9}><path d="M0 0v9l5-4.500z" fill="#5a5a5a" /></Svg>
              </DarkH>
            </OutputBody>
          </Panel>
        </Center>

        <Side>
          <Panel>
            <PanelHeader>
              解决方案资源管理器
              <PanelTools>
                <Down />
                <S w={11}><PinV /></S>
                <S w={11}><Close /></S>
              </PanelTools>
            </PanelHeader>
            <SideIconBar $pl={3}>
              <S w={20}><CircleArrow c="#444" back /></S>
              <S w={22}><CircleArrow c="#444" /></S>
              <S w={22}><Home /></S>
              <S w={22}><VsDoc /></S>
              <S w={8}><Sep /></S>
              <S w={22}><History /></S>
              <S w={14}><Down /></S>
              <S w={22}><SyncArrows /></S>
              <S w={22}><Collapse /></S>
              <S w={22}><CopyPages /></S>
              <S w={10}><Sep /></S>
              <Boxed $w={22}><Nodes /></Boxed>
              <S w={12}><Down /></S>
              <S w={8}><Sep /></S>
              <S w={22}><WrenchIcon /></S>
              <Boxed $w={22}><PropPage /></Boxed>
            </SideIconBar>
            <SearchBar>
              <span>搜索解决方案资源管理器(Ctrl+;)</span>
              <S w={26}><Magnifier /><S w={10}><Down /></S></S>
            </SearchBar>
            <Tree>
              <TreeRow $indent={0}>
                <ArrowSlot $w={14} />
                <IconSlot><SolutionIcon /></IconSlot>
                解决方案 'test3.0' (1 个项目，共 1 个)
              </TreeRow>
              <TreeRow $indent={0} $selected>
                <ArrowSlot $w={32}><OpenArrow open /></ArrowSlot>
                <IconSlot><CsBadge><CsBox /><CsInner>C#</CsInner></CsBadge></IconSlot>
                test3.0
              </TreeRow>
              <TreeRow $indent={18}>
                <ArrowSlot $w={32}><OpenArrow /></ArrowSlot>
                <IconSlot><Deps /></IconSlot>
                依赖项
              </TreeRow>
              <TreeRow $indent={18}>
                <ArrowSlot $w={32} />
                <IconSlot><ConfigFile /></IconSlot>
                App.config
              </TreeRow>
              <TreeRow $indent={18}>
                <ArrowSlot $w={32} />
                <IconSlot><ConfigFile /></IconSlot>
                App1.config
              </TreeRow>
              <TreeRow $indent={18}>
                <ArrowSlot $w={32}><OpenArrow open /></ArrowSlot>
                <IconSlot><FormIcon /></IconSlot>
                Form1.cs
              </TreeRow>
              <TreeRow $indent={36}>
                <ArrowSlot $w={32}><OpenArrow /></ArrowSlot>
                <IconSlot><CsText>C#</CsText></IconSlot>
                Form1.Designer.cs
              </TreeRow>
              <TreeRow $indent={36}>
                <ArrowSlot $w={32} />
                <IconSlot><ResxIcon /></IconSlot>
                Form1.resx
              </TreeRow>
              <TreeRow $indent={18}>
                <ArrowSlot $w={32}><OpenArrow /></ArrowSlot>
                <IconSlot><CsText>C#</CsText></IconSlot>
                Program.cs
              </TreeRow>
            </Tree>
          </Panel>
          <BottomTabs>
            <BottomTab $active>解决方案资源管理器</BottomTab>
            <BottomTab>Git 更改</BottomTab>
          </BottomTabs>
          <Panel $grow>
            <PanelHeader>
              属性
              <PanelTools>
                <Down />
                <S w={11}><PinV /></S>
                <S w={11}><Close /></S>
              </PanelTools>
            </PanelHeader>
            <ObjectBar>
              <ObjectName>用户登录</ObjectName>
              System.Windows.Forms.Form
              <PanelTools><Down /></PanelTools>
            </ObjectBar>
            <SideIconBar $pl={2}>
              <Boxed $w={23}><Categories /></Boxed>
              <S w={24}>
                <Alpha>A<br />Z<AlphaArrow><ArrowUp size={11} color="#4a9fe8" strokeWidth={3} style={{ transform: 'rotate(180deg)' }} /></AlphaArrow></Alpha>
              </S>
              <S w={5}><Sep /></S>
              <Boxed $w={23}><PropIcon /></Boxed>
              <S w={20}><Bolt /></S>
              <S w={14}><Sep /></S>
              <S w={12}><KeyIcon /></S>
            </SideIconBar>
            <PropGrid>
              <PropBlock>
                <Expander>+</Expander>
                <PropRows>
                  {propRows.map(r => (
                    <PropRow key={r.name}>
                      <PropName $selected={r.selected}>{r.name}</PropName>
                      <PropValue $bold={r.selected}>
                        {r.swatch && <Swatch />}
                        {r.value}
                      </PropValue>
                    </PropRow>
                  ))}
                </PropRows>
              </PropBlock>
              <PropScroll>
                <ScrollCap><Tri up c="#8a8a8a" /></ScrollCap>
                <PropThumb />
                <DarkFill />
                <ScrollCap><Tri c="#8a8a8a" /></ScrollCap>
              </PropScroll>
            </PropGrid>
            <Desc>
              <DescTitle>Text</DescTitle>
              <DescText>与控件关联的文本。</DescText>
            </Desc>
          </Panel>
          <Heat>
            {heatColors.map((c, i) => <HeatTick key={i} $c={c} />)}
          </Heat>
        </Side>
      </Main>

      <Status>
        <Svg w={15} h={14}><path d="M.5.5h13v10H6l-3 3v-3H.5zM3 4h8M3 7h8" stroke="#d8d8d8" /></Svg>
        <StatusLabel>就绪</StatusLabel>
        <StatusRight>
          <ArrowUp size={15} color="#e0e0e0" strokeWidth={1.3} />
          添加到源代码
        </StatusRight>
      </Status>

      <Ime>
        <ImeLogo>S</ImeLogo>
        <ImeItem $w={22}>中</ImeItem>
        <ImeItem $w={22}>,</ImeItem>
        <ImeItem $w={22}><Smile size={18} strokeWidth={2.2} /></ImeItem>
        <ImeItem $w={22}><Mic size={18} strokeWidth={2.2} /></ImeItem>
        <ImeItem $w={24}><Keyboard size={19} strokeWidth={2.2} /></ImeItem>
        <ImeItem $w={22}>
          <Svg w={18} h={14}><ellipse cx="7" cy="6" rx="6" ry="4" fill="#b9c6d3" /><path d="M12 9v4M15 9v4" stroke="#7a8a9a" /></Svg>
        </ImeItem>
        <ImeItem $w={21}><Shirt size={18} fill="#1679c9" strokeWidth={2} /></ImeItem>
        <ImeItem $w={20}><ImeGrid><ImeCell /><ImeCell /><ImeCell /><ImeCell /></ImeGrid></ImeItem>
      </Ime>
      <Watermark>CSDN @菜鸟1号www</Watermark>
    </Page>
  )
}
